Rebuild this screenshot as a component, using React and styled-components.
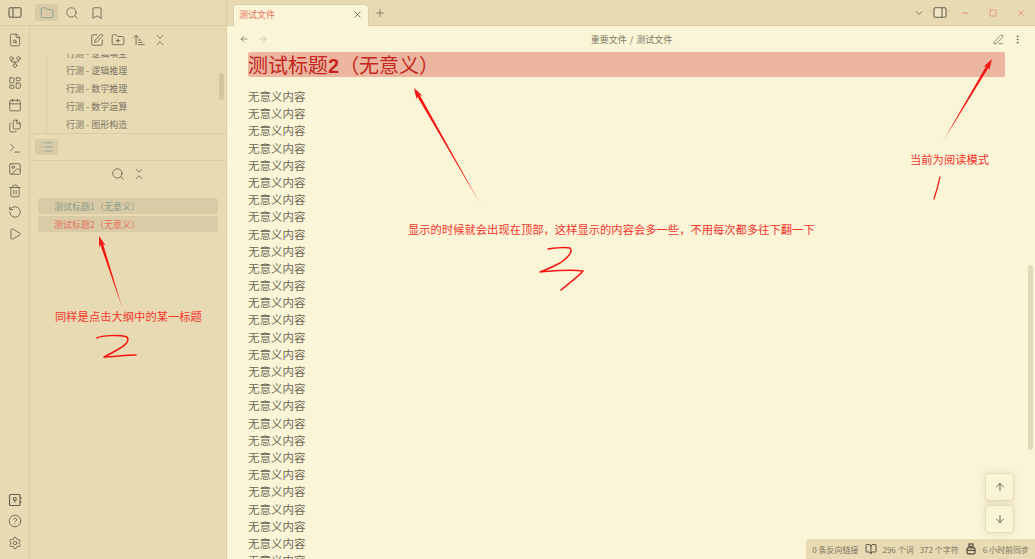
import React from "react";
import styled, { createGlobalStyle } from "styled-components";
import {
  Folder,
  Search,
  Bookmark,
  FileSearch,
  GitFork,
  LayoutDashboard,
  Calendar,
  Files,
  Terminal,
  Image,
  Trash2,
  RotateCcw,
  Play,
  HelpCircle,
  Settings,
  SquarePen,
  FolderPlus,
  ArrowUpNarrowWide,
  ChevronsDownUp,
  List,
  X,
  Plus,
  ChevronDown,
  Minus,
  Square,
  ArrowLeft,
  ArrowRight,
  ArrowUp,
  ArrowDown,
  PenLine,
  MoreVertical,
  BookOpen,
} from "lucide-react";

const GlobalStyle = createGlobalStyle`
  html, body {
    margin: 0;
    padding: 0;
    height: 100%;
    overflow: hidden;
    background: #fbf5d8;
  }
  body {
    font-family: "Noto Sans CJK SC", "Liberation Sans", sans-serif;
  }
`;

const Window = styled.div`
  position: relative;
  display: flex;
  width: 1035px;
  height: 559px;
  overflow: hidden;
  background: #fbf5d8;
`;

const Side = styled.div`
  display: flex;
  flex-direction: column;
  width: 227px;
  flex: none;
  background: #e8dab3;
  border-right: 1px solid #dccda6;
  box-sizing: border-box;
`;

const SideTop = styled.div`
  display: flex;
  align-items: center;
  height: 26px;
  flex: none;
  border-bottom: 1px solid #dccda6;
  box-sizing: border-box;
`;

const RibbonCorner = styled.div`
  display: flex;
  justify-content: center;
  width: 30px;
  flex: none;
`;

const TabIcons = styled.div`
  display: flex;
  align-items: center;
  gap: 2px;
  padding-left: 5px;
`;

const IconBox = styled.div`
  display: flex;
  align-items: center;
  justify-content: center;
  width: ${(p) => p.$w || 23}px;
  height: ${(p) => p.$h || 17}px;
  border-radius: 3px;
  background: ${(p) => (p.$active ? "#d9cba6" : "transparent")};
  color: ${(p) => (p.$active ? "#7f9c94" : "#635d4c")};
`;

const SideBody = styled.div`
  display: flex;
  flex: 1;
  min-height: 0;
`;

const Ribbon = styled.div`
  display: flex;
  flex-direction: column;
  align-items: center;
  justify-content: space-between;
  width: 30px;
  flex: none;
  padding: 7px 0 9px;
  border-right: 1px solid #dccda6;
  box-sizing: border-box;
  color: #635d4c;
`;

const RibbonGroup = styled.div`
  display: flex;
  flex-direction: column;
  align-items: center;
  gap: 7.55px;
`;

const Panes = styled.div`
  display: flex;
  flex-direction: column;
  flex: 1;
  min-width: 0;
`;

const FilesPane = styled.div`
  position: relative;
  height: 107px;
  flex: none;
  border-bottom: 1px solid #dccda6;
  overflow: hidden;
`;

const PaneActions = styled.div`
  display: flex;
  justify-content: center;
  align-items: center;
  gap: 5px;
  height: 28px;
  color: #635d4c;
`;

const TreeList = styled.div`
  margin: 0 0 0 16px;
  padding-left: 19px;
  border-left: 1px solid #dccda6;
  height: 84px;
  overflow: hidden;
`;

const TreeRow = styled.div`
  height: 18px;
  line-height: 18px;
  font-size: 9px;
  color: #7d7663;
  white-space: nowrap;
`;

const TreeClip = styled(TreeRow)`
  height: 8px;
  line-height: 0;
`;

const TreeThumb = styled.div`
  position: absolute;
  right: 2px;
  top: 47px;
  width: 5px;
  height: 27px;
  border-radius: 3px;
  background: #d3c5a0;
`;

const OutlineTabs = styled.div`
  display: flex;
  align-items: center;
  height: 27px;
  flex: none;
  padding-left: 5px;
  border-bottom: 1px solid #dccda6;
  box-sizing: border-box;
`;

const OutlineActions = styled(PaneActions)`
  height: 26px;
`;

const Outline = styled.div`
  display: flex;
  flex-direction: column;
  gap: 2px;
  padding: 11px 8px 0;
`;

const OutlineRow = styled.div`
  height: 16px;
  line-height: 17px;
  padding-left: 16px;
  border-radius: 3px;
  background: #d9cba6;
  font-size: 9px;
  color: ${(p) => (p.$current ? "#e8705e" : "#8a9a8a")};
  white-space: nowrap;
`;

const Main = styled.div`
  display: flex;
  flex-direction: column;
  flex: 1;
  min-width: 0;
  position: relative;
`;

const TitleBar = styled.div`
  display: flex;
  align-items: flex-end;
  height: 26px;
  flex: none;
  background: #e8dab3;
  border-bottom: 1px solid #dccda6;
  box-sizing: border-box;
  padding-left: 6px;
`;

const Tab = styled.div`
  display: flex;
  align-items: center;
  justify-content: space-between;
  width: 136px;
  height: 22px;
  margin-bottom: -1px;
  padding: 0 5px 2px 5px;
  box-sizing: border-box;
  background: #fbf5d8;
  border: 1px solid #dccda6;
  border-bottom: none;
  border-radius: 4px 4px 0 0;
  font-size: 9px;
  color: #e8705e;
`;

const TabClose = styled.div`
  display: flex;
  color: #4c4839;
`;

const NewTab = styled.div`
  display: flex;
  align-self: center;
  margin-left: 5px;
  color: #6b6553;
`;

const TitleSpacer = styled.div`
  flex: 1;
`;

const WindowControls = styled.div`
  display: flex;
  align-items: center;
  align-self: center;
`;

const WindowButton = styled.div`
  display: flex;
  justify-content: center;
  width: ${(p) => p.$w || 28}px;
  color: ${(p) => p.$color || "#e98672"};
`;

const NavBar = styled.div`
  display: flex;
  align-items: center;
  height: 26px;
  flex: none;
  padding: 0 12px 0 12px;
  color: #5e594a;
`;

const NavArrows = styled.div`
  display: flex;
  align-items: center;
  gap: 9px;
`;

const NavArrow = styled.div`
  display: flex;
  color: ${(p) => (p.$off ? "#b5b09b" : "#5e594a")};
`;

const Breadcrumb = styled.div`
  flex: 1;
  text-align: center;
  font-size: 9px;
  color: #7d7663;
  padding-left: 2px;
  word-spacing: 1px;
`;

const NavActions = styled.div`
  display: flex;
  align-items: center;
  gap: 8px;
`;

const Content = styled.div`
  flex: 1;
  padding: 0 30px 0 21px;
  overflow: hidden;
`;

const Heading = styled.div`
  height: 25px;
  line-height: 25px;
  background: #ecb5a0;
  border-radius: 2px;
  font-size: 20px;
  font-weight: 400;
  color: #c4261d;
  white-space: nowrap;
  margin-bottom: 11px;
  & b {
    font-family: "Liberation Sans", sans-serif;
    font-weight: 700;
  }
`;

const Line = styled.div`
  height: 17.19px;
  line-height: 17.19px;
  font-size: 11.5px;
  color: #6e6a58;
  white-space: nowrap;
`;

const ScrollThumb = styled.div`
  position: absolute;
  right: 2px;
  top: 265px;
  height: 185px;
  width: 5px;
  background: #e0d9ba;
  border-radius: 3px;
`;

const FloatButtons = styled.div`
  position: absolute;
  right: 21px;
  bottom: 26px;
  display: flex;
  flex-direction: column;
  gap: 4px;
`;

const FloatButton = styled.div`
  display: flex;
  align-items: center;
  justify-content: center;
  width: 29px;
  height: 28px;
  box-sizing: border-box;
  background: #fbf5d8;
  border: 1px solid #e6dcb9;
  border-radius: 4px;
  box-shadow: 0 0 8px rgba(120, 100, 50, 0.18);
  color: #3f3b2e;
`;

const StatusBar = styled.div`
  position: absolute;
  right: 0;
  bottom: 0;
  display: flex;
  align-items: center;
  gap: 6px;
  height: 20px;
  padding: 0 6px;
  box-sizing: border-box;
  background: #e8dab3;
  border-radius: 4px 0 0 0;
  font-size: 8px;
  color: #7d7663;
  white-space: nowrap;
`;

const StatusIcon = styled.div`
  display: flex;
  color: #4f4a3c;
`;

const Ink = styled.svg`
  position: absolute;
  inset: 0;
  width: 1035px;
  height: 559px;
  pointer-events: none;
`;

const Note = styled.div`
  position: absolute;
  left: ${(p) => p.$x}px;
  top: ${(p) => p.$y}px;
  font-size: 11.3px;
  line-height: 16px;
  color: #f5342c;
  white-space: nowrap;
`;

// window layout buttons, wider than the lucide panel icons
function PaneIcon({ side }) {
  const x = side === "left" ? 5 : 9;
  return (
    <svg width="14" height="11" viewBox="0 0 14 11" fill="none" stroke="#635d4c" strokeWidth="1.1">
      <rect x="1" y="0.8" width="12" height="9.4" rx="1.4" fill={side === "left" ? "none" : "#f3e8c6"} />
      <path d={`M${x} 1V10`} />
    </svg>
  );
}

function VaultIcon() {
  return (
    <svg width="14" height="14" viewBox="0 0 14 14" fill="none" stroke="#635d4c" strokeWidth="1.1">
      <rect x="1.5" y="1.5" width="10.5" height="11" rx="1" />
      <path d="M12.8 4v1.5M12.8 8.5V10" />
      <circle cx="6.8" cy="6" r="1.5" />
      <path d="M6.8 7.5v2" />
    </svg>
  );
}

function SyncIcon() {
  return (
    <svg width="12" height="12" viewBox="0 0 12 12" fill="none" stroke="#4f4a3c" strokeWidth="1.2">
      <rect x="4" y="1" width="4" height="2.6" />
      <rect x="2" y="4.8" width="8" height="6" rx="1" />
      <path d="M2 7.4h8" />
    </svg>
  );
}

// annotation arrow: thin at the tail, thick at the head
function Arrow({ id, from, to }) {
  const dx = to[0] - from[0];
  const dy = to[1] - from[1];
  const len = Math.hypot(dx, dy);
  const ux = dx / len;
  const uy = dy / len;
  const at = (back, off) => `${to[0] - ux * back - uy * off},${to[1] - uy * back + ux * off}`;
  const points = [
    `${from[0]},${from[1]}`,
    at(9, 1.4),
    at(11, 3.4),
    `${to[0]},${to[1]}`,
    at(11, -3.4),
    at(9, -1.4),
  ].join(" ");
  return (
    <>
      <defs>
        <linearGradient id={id} gradientUnits="userSpaceOnUse" x1={from[0]} y1={from[1]} x2={to[0]} y2={to[1]}>
          <stop offset="0" stopColor="#f5160f" stopOpacity="0.25" />
          <stop offset="0.2" stopColor="#f5160f" />
          <stop offset="1" stopColor="#f5160f" />
        </linearGradient>
      </defs>
      <polygon points={points} fill={`url(#${id})`} stroke="none" />
    </>
  );
}

const ribbonTop = [FileSearch, GitFork, LayoutDashboard, Calendar, Files, Terminal, Image, Trash2, RotateCcw, Play];
const lines = Array.from({ length: 28 }, (_, i) => i);

function App() {
  return (
    <Window>
      <GlobalStyle />
      <Side>
        <SideTop>
          <RibbonCorner>
            <PaneIcon side="left" />
          </RibbonCorner>
          <TabIcons>
            <IconBox $active>
              <Folder size={14} strokeWidth={1.4} />
            </IconBox>
            <IconBox>
              <Search size={14} strokeWidth={1.4} />
            </IconBox>
            <IconBox>
              <Bookmark size={14} strokeWidth={1.4} />
            </IconBox>
          </TabIcons>
        </SideTop>
        <SideBody>
          <Ribbon>
            <RibbonGroup>
              {ribbonTop.map((Icon, i) => (
                <Icon key={i} size={14} strokeWidth={1.4} />
              ))}
            </RibbonGroup>
            <RibbonGroup>
              <VaultIcon />
              <HelpCircle size={14} strokeWidth={1.4} />
              <Settings size={14} strokeWidth={1.4} />
            </RibbonGroup>
          </Ribbon>
          <Panes>
            <FilesPane>
              <PaneActions>
                <IconBox $w={16}>
                  <SquarePen size={14} strokeWidth={1.4} />
                </IconBox>
                <IconBox $w={16}>
                  <FolderPlus size={14} strokeWidth={1.4} />
                </IconBox>
                <IconBox $w={16}>
                  <ArrowUpNarrowWide size={14} strokeWidth={1.4} />
                </IconBox>
                <IconBox $w={16}>
                  <ChevronsDownUp size={14} strokeWidth={1.4} />
                </IconBox>
              </PaneActions>
              <TreeList>
                <TreeClip>行测 - 逻辑填空</TreeClip>
                <TreeRow>行测 - 逻辑推理</TreeRow>
                <TreeRow>行测 - 数学推理</TreeRow>
                <TreeRow>行测 - 数学运算</TreeRow>
                <TreeRow>行测 - 图形构造</TreeRow>
              </TreeList>
              <TreeThumb />
            </FilesPane>
            <OutlineTabs>
              <IconBox $active $h={16}>
                <List size={14} strokeWidth={1.4} />
              </IconBox>
            </OutlineTabs>
            <OutlineActions>
              <IconBox $w={16}>
                <Search size={14} strokeWidth={1.4} />
              </IconBox>
              <IconBox $w={16}>
                <ChevronsDownUp size={14} strokeWidth={1.4} />
              </IconBox>
            </OutlineActions>
            <Outline>
              <OutlineRow>测试标题1（无意义）</OutlineRow>
              <OutlineRow $current>测试标题2（无意义）</OutlineRow>
            </Outline>
          </Panes>
        </SideBody>
      </Side>
      <Main>
        <TitleBar>
          <Tab>
            测试文件
            <TabClose>
              <X size={11} strokeWidth={1.5} />
            </TabClose>
          </Tab>
          <NewTab>
            <Plus size={12} strokeWidth={1.5} />
          </NewTab>
          <TitleSpacer />
          <WindowControls>
            <WindowButton $w={20} $color="#635d4c">
              <ChevronDown size={12} strokeWidth={1.5} />
            </WindowButton>
            <WindowButton $w={22} $color="#635d4c">
              <PaneIcon side="right" />
            </WindowButton>
            <WindowButton>
              <Minus size={10} strokeWidth={2} />
            </WindowButton>
            <WindowButton>
              <Square size={8} strokeWidth={2.4} />
            </WindowButton>
            <WindowButton>
              <X size={10} strokeWidth={2} />
            </WindowButton>
          </WindowControls>
        </TitleBar>
        <NavBar>
          <NavArrows>
            <NavArrow>
              <ArrowLeft size={10} strokeWidth={1.5} />
            </NavArrow>
            <NavArrow $off>
              <ArrowRight size={10} strokeWidth={1.5} />
            </NavArrow>
          </NavArrows>
          <Breadcrumb>重要文件 / 测试文件</Breadcrumb>
          <NavActions>
            <PenLine size={11} strokeWidth={1.4} />
            <MoreVertical size={11} strokeWidth={1.8} />
          </NavActions>
        </NavBar>
        <Content>
          <Heading>
            测试标题<b>2</b>（无意义）
          </Heading>
          {lines.map((i) => (
            <Line key={i}>无意义内容</Line>
          ))}
        </Content>
        <ScrollThumb />
        <FloatButtons>
          <FloatButton>
            <ArrowUp size={12} strokeWidth={1.5} />
          </FloatButton>
          <FloatButton>
            <ArrowDown size={12} strokeWidth={1.5} />
          </FloatButton>
        </FloatButtons>
        <StatusBar>
          <span>0 条反向链接</span>
          <StatusIcon>
            <BookOpen size={12} strokeWidth={1.8} />
          </StatusIcon>
          <span>296 个词</span>
          <span>372 个字符</span>
          <StatusIcon>
            <SyncIcon />
          </StatusIcon>
          <span>6 小时前同步</span>
        </StatusBar>
      </Main>

      <Ink viewBox="0 0 1035 559" fill="none" stroke="#f5160f" strokeLinecap="round" strokeLinejoin="round">
        <Arrow id="arrow-outline" from={[123, 310]} to={[99, 236]} />
        <Arrow id="arrow-heading" from={[482, 207]} to={[414, 88]} />
        <Arrow id="arrow-mode" from={[942, 143]} to={[992, 59]} />
        {/* hand written numbers */}
        <path d="M934 199 C936 193 938 186 940 177" strokeWidth="1.2" />
        <path d="M97 338 C102 335 120 335 127 337 C130 341 125 346 117 350 C112 353 108 355 104 357 C113 357 125 355 136 355" strokeWidth="1.5" />
        <path d="M548 249 C555 248 566 247 570 248 C574 252 566 259 560 263 C553 267 545 270 540 272 C552 271 570 269 583 271 C579 276 568 284 561 290" strokeWidth="1.5" />
      </Ink>
      <Note $x={55} $y={308}>同样是点击大纲中的某一标题</Note>
      <Note $x={408} $y={221}>显示的时候就会出现在顶部，这样显示的内容会多一些，不用每次都多往下翻一下</Note>
      <Note $x={910} $y={151}>当前为阅读模式</Note>
    </Window>
  );
}

export default App;
